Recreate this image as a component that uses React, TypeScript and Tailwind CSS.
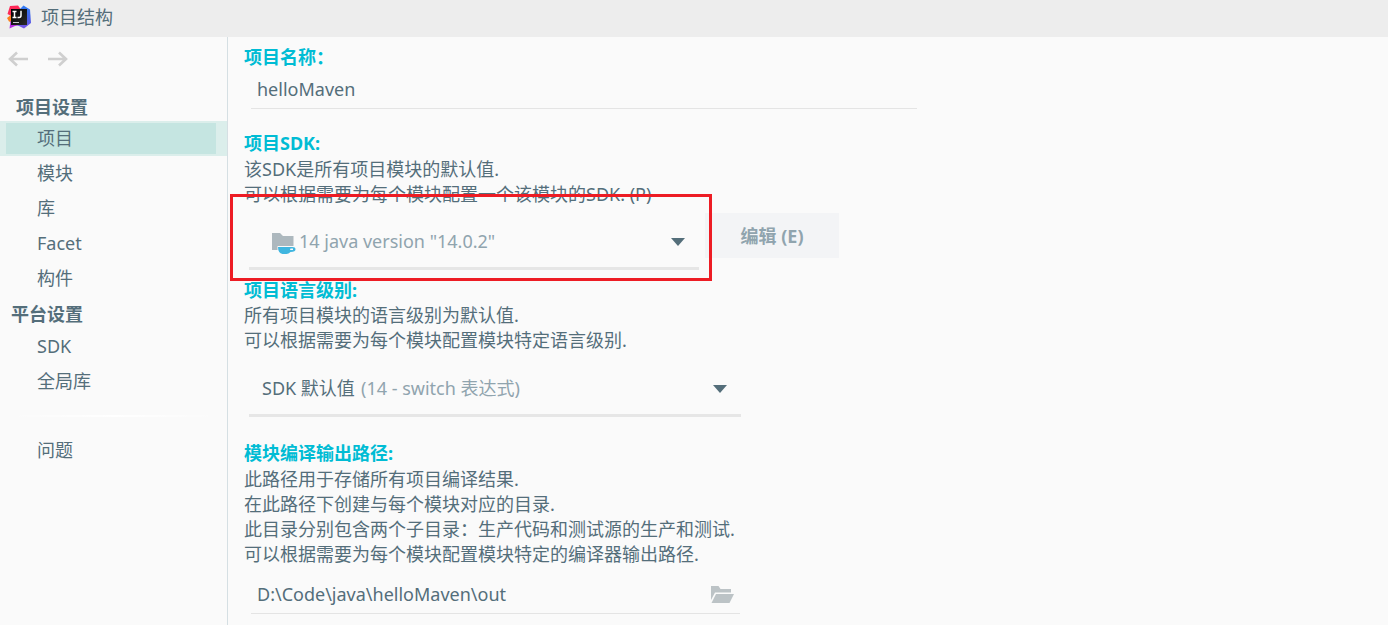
import { useState } from "react";

const projectItems = ["项目", "模块", "库", "Facet", "构件"];
const platformItems = ["SDK", "全局库"];

function Logo() {
    return (
        <svg className="size-6" viewBox="0 0 24 24" aria-hidden="true">
            <defs>
                <linearGradient id="logo-blue" x1="0" y1="0" x2="0" y2="1">
                    <stop offset="0" stopColor="#2f7df6" />
                    <stop offset="0.6" stopColor="#4a5fe6" />
                    <stop offset="1" stopColor="#7a55e8" />
                </linearGradient>
                <linearGradient id="logo-black" x1="0" y1="0" x2="1" y2="1">
                    <stop offset="0" stopColor="#000" />
                    <stop offset="1" stopColor="#2b2b2b" />
                </linearGradient>
            </defs>
            <path d="M3 1 L11 0.500 L15 6 L8 13 L0.500 9 Z" fill="#fe2857" />
            <path d="M0 13 L5 9 L7 18 L2 16.500 Z" fill="#fc801d" />
            <path d="M3.500 16 L9 14 L14 20 L8 21 L2.500 23.500 Z" fill="#b52fe0" />
            <path d="M13 4 L16.500 0.500 L23 4.500 L24 18 L17 23.500 L10 20 Z" fill="url(#logo-blue)" />
            <rect x="4" y="4" width="16" height="16" fill="url(#logo-black)" />
            <path d="M5.500 6.500h4M7.500 6.500v6M5.500 12.500h4M14 5.800v4.700q0 2-2 2h-1.500" fill="none" stroke="#fff" strokeWidth="1.500" />
            <path d="M6 17.500h6" stroke="#ccc" strokeWidth="1" />
        </svg>
    );
}

function Arrow({ flip = false }: { flip?: boolean }) {
    return (
        <svg className={flip ? "h-4 w-5 rotate-180" : "h-4 w-5"} viewBox="0 0 20 16" fill="none" stroke="#cfcfcf" strokeWidth="2.600" aria-hidden="true">
            <path d="M20 8H2M9 1.500L2 8l7 6.500" />
        </svg>
    );
}

function Caret() {
    return (
        <svg className="pointer-events-none absolute top-[25px] right-[14px] h-2 w-[14px]" viewBox="0 0 14 8" aria-hidden="true">
            <path d="M0 0h14L7 8z" fill="#546e7a" />
        </svg>
    );
}

function SdkIcon() {
    return (
        <svg className="pointer-events-none absolute top-5 left-[23px] h-[22px] w-6" viewBox="0 0 24 22" aria-hidden="true">
            <path d="M0 0h8l3 3h10.500v10H5.500v4H0z" fill="#adb8be" />
            <path d="M6 14h13q4.500-.5 4.500 2.300t-5 2.700q-2 2-4 2h-4q-4.500-1-4.500-7z" fill="#40b6e0" />
            <path d="M18.500 15.500h2.500v1.500h-3z" fill="#fafafa" />
        </svg>
    );
}

function FolderIcon() {
    return (
        <svg className="h-[17px] w-[23px]" viewBox="0 0 23 17" aria-hidden="true">
            <path d="M0 0h7.500l2 3H20v3.500H4L0 14z" fill="#bcc3c6" />
            <path d="M5 8h18l-4.500 9H.5z" fill="#bcc3c6" />
        </svg>
    );
}

function NavItem({ name, active, onPick }: { name: string; active: boolean; onPick: (name: string) => void }) {
    return (
        <li className={active ? "h-[35px] bg-[#dbeeeb] py-0.5 pr-[11px] pl-1.5" : "h-[35px] py-0.5 pr-[11px] pl-1.5"}>
            <button
                type="button"
                onClick={() => onPick(name)}
                className={active ? "block size-full bg-[#c5e5e1] pl-[31px] text-left" : "block size-full pl-[31px] text-left"}
            >
                {name}
            </button>
        </li>
    );
}

export default function App() {
    const [page, setPage] = useState("项目");
    const [name, setName] = useState("helloMaven");
    const [output, setOutput] = useState("D:\\Code\\java\\helloMaven\\out");

    return (
        <div className="flex min-h-screen flex-col bg-[#fafafa] font-['Noto_Sans','Noto_Sans_CJK_SC',sans-serif] text-[18px] leading-[25px] text-[#546e7a]">
            <header className="flex h-[37px] shrink-0 items-center gap-2.5 bg-[#ededed] pb-1 pl-[7px]">
                <Logo />
                <h1 className="pt-0.5">项目结构</h1>
            </header>
            <div className="flex grow">
                <aside className="w-[228px] shrink-0 border-r border-[#d5dfe3]">
                    <div className="flex h-[43px] items-center gap-5 pl-2">
                        <button type="button" aria-label="后退"><Arrow /></button>
                        <button type="button" aria-label="前进"><Arrow flip /></button>
                    </div>
                    <nav>
                        <h2 className="mt-[15px] pb-px pl-4 font-bold">项目设置</h2>
                        <ul>
                            {projectItems.map((item) => (
                                <NavItem key={item} name={item} active={item === page} onPick={setPage} />
                            ))}
                        </ul>
                        <h2 className="pt-1.5 pb-0.5 pl-[11px] font-bold">平台设置</h2>
                        <ul>
                            {platformItems.map((item) => (
                                <NavItem key={item} name={item} active={item === page} onPick={setPage} />
                            ))}
                        </ul>
                        <hr className="mx-2 my-4 h-0.5 border-0 bg-linear-to-r from-transparent via-white to-transparent" />
                        <ul>
                            <NavItem name="问题" active={page === "问题"} onPick={setPage} />
                        </ul>
                    </nav>
                </aside>
                <main className="min-w-0 grow pt-2 pl-4">
                    <section>
                        <label htmlFor="name" className="block font-bold text-[#00bcd4]">项目名称：</label>
                        <div className="ml-[7px] max-w-[666px] border-b border-[#e4e4e4]">
                            <input
                                id="name"
                                value={name}
                                onChange={(e) => setName(e.target.value)}
                                className="block h-[38px] w-full bg-transparent px-1.5 outline-none"
                            />
                        </div>
                    </section>

                    <section className="mt-[22px]">
                        <label htmlFor="sdk" className="block pb-px font-bold text-[#00bcd4]">项目SDK:</label>
                        <p>该SDK是所有项目模块的默认值.</p>
                        <p>可以根据需要为每个模块配置一个该模块的SDK. (P)</p>
                        <div className="relative mt-1.5 ml-[5px] flex items-start gap-1.5">
                            <div className="relative w-[450px]">
                                <select id="sdk" className="block h-[57px] w-full appearance-none border-b-3 border-[#e6e6e6] bg-transparent pt-0.5 pl-[50px] text-[#90a4ae] outline-none">
                                    <option>14 java version "14.0.2"</option>
                                </select>
                                <SdkIcon />
                                <Caret />
                            </div>
                            <button type="button" className="h-[45px] w-[134px] bg-[#f3f4f6] pt-0.5 font-bold text-[#90a4ae]">编辑 (E)</button>
                            {/* highlight frame round the SDK chooser */}
                            <div className="pointer-events-none absolute -top-[19px] -left-[19px] h-[87px] w-[482px] border-3 border-[#ed1c24]" />
                        </div>
                    </section>

                    <section className="mt-2">
                        <label htmlFor="level" className="block font-bold text-[#00bcd4]">项目语言级别:</label>
                        <p>所有项目模块的语言级别为默认值.</p>
                        <p>可以根据需要为每个模块配置模块特定语言级别.</p>
                        <div className="relative mt-[7px] ml-[5px] w-[492px]">
                            <select id="level" className="block h-[57px] w-full appearance-none border-b-3 border-[#e6e6e6] bg-transparent pt-0.5 pl-[13px] outline-none">
                                <option>SDK 默认值</option>
                            </select>
                            <span className="pointer-events-none absolute top-4 left-28 text-[#90a4ae]">(14 - switch 表达式)</span>
                            <Caret />
                        </div>
                    </section>

                    <section className="mt-6">
                        <label htmlFor="output" className="block pb-px font-bold text-[#00bcd4]">模块编译输出路径:</label>
                        <p>此路径用于存储所有项目编译结果.</p>
                        <p>在此路径下创建与每个模块对应的目录.</p>
                        <p>此目录分别包含两个子目录：生产代码和测试源的生产和测试.</p>
                        <p>可以根据需要为每个模块配置模块特定的编译器输出路径.</p>
                        <div className="mt-2 ml-[7px] flex w-[489px] items-center border-b border-[#e4e4e4] pr-1.5">
                            <input
                                id="output"
                                value={output}
                                onChange={(e) => setOutput(e.target.value)}
                                className="block h-[38px] min-w-0 grow bg-transparent px-1.5 outline-none"
                            />
                            <button type="button" aria-label="浏览"><FolderIcon /></button>
                        </div>
                    </section>
                </main>
            </div>
        </div>
    );
}
